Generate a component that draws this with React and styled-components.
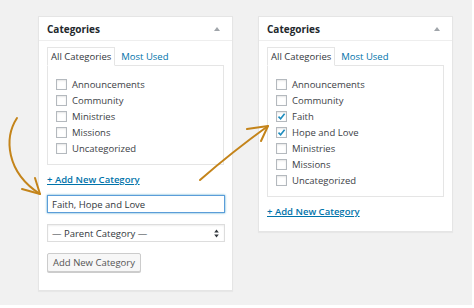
import React from "react";
import styled, { createGlobalStyle } from "styled-components";

const Global = createGlobalStyle`
  html, body { margin: 0; padding: 0; background: #fff; }
  body { font-family: "Open Sans", "Liberation Sans", sans-serif; }
`;

const Stage = styled.div`
  position: relative;
  width: 472px;
  height: 305px;
  background: #f1f1f1;
  box-sizing: border-box;
  padding: 16px 0 0 38px;
  display: flex;
  align-items: flex-start;
  gap: 25px;
`;

const Panel = styled.div`
  width: 195px;
  box-sizing: border-box;
  background: #fff;
  border: 1px solid #e5e5e5;
  box-shadow: 0 1px 1px rgba(0, 0, 0, 0.04);
  padding-bottom: ${(p) => p.$pb}px;
`;

const Header = styled.div`
  height: 23px;
  border-bottom: 1px solid #eee;
  display: flex;
  align-items: center;
  justify-content: space-between;
  padding: 0 12px 0 8px;
`;

const Title = styled.h2`
  margin: 0;
  font-size: 10px;
  font-weight: 700;
  color: #23282d;
`;

const Toggle = styled.span`
  width: 0;
  height: 0;
  border-left: 3px solid transparent;
  border-right: 3px solid transparent;
  border-bottom: 4px solid #a0a5aa;
`;

const Body = styled.div`
  padding: 6px 8px 0 8px;
  display: flex;
  flex-direction: column;
`;

const Tabs = styled.div`
  display: flex;
  align-items: flex-end;
  gap: 2px;
  height: 19px;
  position: relative;
  z-index: 1;
  margin-bottom: -1px;
`;

const Tab = styled.div`
  height: 19px;
  box-sizing: border-box;
  padding: 0 3px;
  display: flex;
  align-items: center;
  font-size: 9.5px;
  color: ${(p) => (p.$active ? "#32373c" : "#0073aa")};
  background: ${(p) => (p.$active ? "#fff" : "transparent")};
  border: 1px solid ${(p) => (p.$active ? "#e5e5e5" : "transparent")};
  border-bottom-color: ${(p) => (p.$active ? "#fff" : "transparent")};
`;

const List = styled.div`
  border: 1px solid #e5e5e5;
  background: #fff;
  padding: 10px 8px 8px 8px;
  display: flex;
  flex-direction: column;
`;

const Item = styled.label`
  height: 16px;
  display: flex;
  align-items: center;
  gap: 5px;
  font-size: 9.5px;
  color: #3c4146;
`;

const Box = styled.span`
  width: 11px;
  height: 11px;
  box-sizing: border-box;
  border: 1px solid #b4b9be;
  background: #fff;
  box-shadow: inset 0 1px 2px rgba(0, 0, 0, 0.1);
  display: flex;
  align-items: center;
  justify-content: center;
`;

const Link = styled.a`
  margin-top: 9px;
  font-size: 9.5px;
  font-weight: 600;
  color: #0073aa;
  text-decoration: underline;
  line-height: 12px;
`;

const Input = styled.div`
  margin-top: 9px;
  height: 18px;
  box-sizing: border-box;
  border: 1px solid #5b9dd9;
  box-shadow: 0 0 2px rgba(30, 140, 190, 0.8);
  padding: 0 4px;
  display: flex;
  align-items: center;
  font-size: 9.5px;
  color: #32373c;
  width: 178px;
`;

const Select = styled.div`
  margin-top: 11px;
  height: 18px;
  box-sizing: border-box;
  border: 1px solid #ddd;
  box-shadow: inset 0 1px 2px rgba(0, 0, 0, 0.07);
  padding: 0 5px 0 4px;
  display: flex;
  align-items: center;
  justify-content: space-between;
  font-size: 9.5px;
  color: #32373c;
  width: 178px;
`;

const Button = styled.button`
  margin-top: 11px;
  align-self: flex-start;
  height: 19px;
  width: 94px;
  box-sizing: border-box;
  border: 1px solid #ccc;
  border-radius: 2px;
  background: #f7f7f7;
  box-shadow: 0 1px 0 #ccc;
  font-family: "Open Sans", "Liberation Sans", sans-serif;
  font-size: 9.5px;
  color: #555;
  padding: 0;
`;

const Arrows = styled.svg`
  position: absolute;
  left: 0;
  top: 0;
  pointer-events: none;
`;

const Check = () => (
  <svg width="9" height="9" viewBox="0 0 9 9">
    <path d="M1.5 4.6 L3.6 6.7 L7.6 1.8" fill="none" stroke="#1e8cbe" strokeWidth="1.6" />
  </svg>
);

const Updown = () => (
  <svg width="5" height="9" viewBox="0 0 5 9">
    <path d="M2.5 0.5 L4.8 3.6 L0.2 3.6 Z M2.5 8.5 L4.8 5.4 L0.2 5.4 Z" fill="#32373c" />
  </svg>
);

const CategoryBox = ({ items, children, pb }) => (
  <Panel $pb={pb}>
    <Header>
      <Title>Categories</Title>
      <Toggle />
    </Header>
    <Body>
      <Tabs>
        <Tab $active>All Categories</Tab>
        <Tab>Most Used</Tab>
      </Tabs>
      <List>
        {items.map(([name, checked]) => (
          <Item key={name}>
            <Box>{checked && <Check />}</Box>
            {name}
          </Item>
        ))}
      </List>
      <Link>+ Add New Category</Link>
      {children}
    </Body>
  </Panel>
);

export default function App() {
  return (
    <>
      <Global />
      <Stage>
        <CategoryBox
          pb={18}
          items={[
            ["Announcements"],
            ["Community"],
            ["Ministries"],
            ["Missions"],
            ["Uncategorized"],
          ]}
        >
          <Input>Faith, Hope and Love</Input>
          <Select>
            <span>— Parent Category —</span>
            <Updown />
          </Select>
          <Button>Add New Category</Button>
        </CategoryBox>
        <CategoryBox
          pb={13}
          items={[
            ["Announcements"],
            ["Community"],
            ["Faith", true],
            ["Hope and Love", true],
            ["Ministries"],
            ["Missions"],
            ["Uncategorized"],
          ]}
        />
        <Arrows width="472" height="305" viewBox="0 0 472 305">
          <g fill="none" stroke="#c4841a" strokeWidth="2" strokeLinecap="round" strokeLinejoin="round">
            <path d="M17 118 C 4 138, 6 172, 40 194" />
            <path d="M22 189 L40 194 L35 178" />
            <path d="M200 180 Q 232 152, 268 126" />
            <path d="M247 129 L268 126 L261 141" />
          </g>
        </Arrows>
      </Stage>
    </>
  );
}
